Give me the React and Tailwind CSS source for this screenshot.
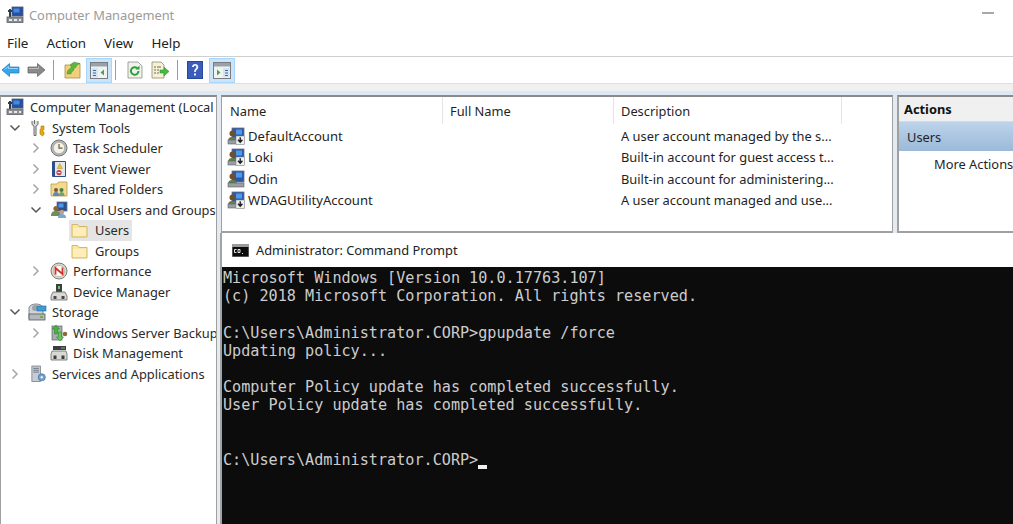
import React from "react";

const Svg = ({ w = 18, h = 18, vb = "0 0 18 18", className = "", children }) => (
  <svg width={w} height={h} viewBox={vb} className={`shrink-0 block ${className}`}>{children}</svg>
);

const CompMgmt = () => (
  <Svg>
    <rect x="6" y="1" width="11" height="9" fill="#2a4f9e" stroke="#4a5a78" strokeWidth="0.8" />
    <rect x="7.5" y="2.5" width="6" height="4" fill="#3f8be6" />
    <path d="M4 3v8M2 5h4" stroke="#2c3e50" strokeWidth="2" />
    <rect x="1" y="11" width="16" height="5.5" fill="#8a8f94" stroke="#5c6066" strokeWidth="0.8" />
    <rect x="3" y="13" width="3" height="2" fill="#e8e8e8" />
    <rect x="8" y="13" width="3" height="2" fill="#e8e8e8" />
    <rect x="13" y="13" width="2" height="2" fill="#e8e8e8" />
  </Svg>
);
const Tools = () => (
  <Svg w={16} h={18} vb="0 0 16 18">
    <path d="M4.5 1v4M2 2v3.5L4 7v9.5h2V7l2-1.5V2" fill="#dcdcdc" stroke="#6a6a6a" strokeWidth="1" />
    <path d="M11 7h3v3.5h-1v2.5h1v2.5l-1.5 1.5L10 15v-4.5L11 10z" fill="#e8a90c" stroke="#a87808" strokeWidth="0.6" />
  </Svg>
);
const Clock = () => (
  <Svg>
    <circle cx="9" cy="9" r="8" fill="#b4b8bc" stroke="#70767c" />
    <circle cx="9" cy="9" r="5.7" fill="#f7f3e4" stroke="#9a9a90" strokeWidth="0.6" />
    <path d="M9 5v4.2h3.6" stroke="#5d5d55" strokeWidth="1.2" fill="none" />
  </Svg>
);
const EventViewer = () => (
  <Svg>
    <rect x="2" y="1" width="14" height="16" rx="1" fill="#2f4f8a" />
    <rect x="5" y="2" width="10" height="14" fill="#e2e6ee" />
    <path d="M9.8 3.5l2.6 5H7.2z" fill="#f2c21e" stroke="#9b7a10" strokeWidth="0.4" />
    <circle cx="9" cy="12.6" r="2.6" fill="#c9413d" />
    <path d="M7.5 12.6h3" stroke="#fff" strokeWidth="1" />
  </Svg>
);
const SharedFolder = () => (
  <Svg>
    <path d="M1 4h6l1.5-2H17v14H1z" fill="#f3d98d" stroke="#b49a52" strokeWidth="0.8" />
    <circle cx="6" cy="10" r="2" fill="#7d5a34" />
    <path d="M3 16c0-3 1-4 3-4s3 1 3 4z" fill="#5e86b8" />
    <circle cx="11.5" cy="10" r="2" fill="#4a7a4a" />
    <path d="M9 16c0-3 1-4 2.5-4s3 1 3 4z" fill="#6fa36f" />
  </Svg>
);
const LocalUsers = () => (
  <Svg>
    <rect x="7" y="1" width="10" height="9" fill="#27508f" stroke="#6c7480" strokeWidth="0.8" />
    <rect x="8.5" y="2.5" width="5" height="4" fill="#4c98ea" />
    <circle cx="6" cy="7.5" r="2.6" fill="#8a6238" />
    <path d="M1 15c0-4 2-5 5-5s5 1 5 5z" fill="#6f8f58" />
    <circle cx="12" cy="11" r="2.2" fill="#c0a080" />
    <path d="M8 17c0-3 1.6-4 4-4s4 1 4 4z" fill="#7ea4d0" />
  </Svg>
);
const Folder = () => (
  <Svg w={17} h={16} vb="0 0 17 16">
    <path d="M1 2.5h5.5L8 4.5h8v10.5H1z" fill="#fbe6a5" stroke="#d3b867" strokeWidth="1" />
    <rect x="2" y="6" width="13" height="8" fill="#fdeebb" />
  </Svg>
);
const Performance = () => (
  <Svg>
    <circle cx="9" cy="9" r="8" fill="#d9d7cb" stroke="#7e7e76" />
    <circle cx="9" cy="9" r="5.6" fill="#fbfbf5" stroke="#a4a49a" strokeWidth="0.6" />
    <path d="M5.5 12.5V6l7 6V5.5" stroke="#d3322e" strokeWidth="1.8" fill="none" />
  </Svg>
);
const DeviceMgr = () => (
  <Svg>
    <rect x="6" y="1" width="6" height="8" fill="#3d3f42" />
    <rect x="8" y="3" width="2" height="3" fill="#63c46a" />
    <path d="M3 9h12l2 4v4H1v-4z" fill="#d8d8d4" stroke="#6a6a68" strokeWidth="0.8" />
    <rect x="3.5" y="13" width="3" height="3" fill="#4a4a4a" />
    <rect x="11.5" y="13" width="3" height="3" fill="#4a4a4a" />
  </Svg>
);
const Storage = () => (
  <Svg w={19} h={18} vb="0 0 19 18" className="-ml-[2px] -mr-[1px]">
    <path d="M1 5c0-2 3-4 7-4s7 2 7 4v11H1z" fill="#d0d4d8" stroke="#666e76" strokeWidth="0.8" />
    <circle cx="7" cy="5" r="3" fill="#9aa2aa" />
    <rect x="9" y="3" width="9" height="5" fill="#3d9bd6" stroke="#256c9e" strokeWidth="0.6" />
    <rect x="1" y="11" width="16" height="6" fill="#b4b8bc" stroke="#555b60" strokeWidth="0.8" />
    <rect x="12" y="13" width="3" height="2" fill="#74b03e" />
  </Svg>
);
const Backup = () => (
  <Svg>
    <rect x="2" y="2" width="10" height="14" fill="#a8adb2" stroke="#5d6268" strokeWidth="0.7" />
    <path d="M6 1l3.5 4H7.5v5H4.5V5H2.5z" fill="#47b53f" stroke="#267d22" strokeWidth="0.5" />
    <path d="M10 17l-3.5-4h2V8h3v5h2z" fill="#5fcb4f" stroke="#267d22" strokeWidth="0.5" />
    <circle cx="15" cy="10" r="2.3" fill="#8a6a44" />
  </Svg>
);
const Disk = () => (
  <Svg>
    <path d="M3 2h13v4H3z" fill="#3b3d40" />
    <rect x="11" y="3.5" width="4" height="1" fill="#71c44c" />
    <path d="M2 7h14l1 3v6H1v-6z" fill="#d8d8d4" stroke="#66686a" strokeWidth="0.8" />
    <rect x="3.5" y="11.5" width="3" height="3.5" fill="#3f3f3f" />
    <rect x="11.5" y="11.5" width="3" height="3.5" fill="#3f3f3f" />
  </Svg>
);
const Services = () => (
  <Svg w={16} h={18} vb="0 0 17 18">
    <rect x="2" y="0.5" width="9" height="16.5" fill="#c6ccd4" stroke="#6f7884" strokeWidth="0.8" />
    <path d="M3.5 3h6M3.5 5h6M3.5 7h6" stroke="#5f6a78" strokeWidth="0.9" />
    <circle cx="12.5" cy="12.5" r="3.8" fill="#6f9fcc" stroke="#3f6c9a" strokeWidth="0.7" />
    <circle cx="12.5" cy="12.5" r="1.3" fill="#e6eef6" />
  </Svg>
);
const User = ({ arrow = true }) => (
  <Svg>
    <rect x="5" y="1" width="12" height="11" fill="#2b58a8" stroke="#6a7280" strokeWidth="0.8" />
    <rect x="9" y="2.5" width="6" height="5" fill="#4c9bec" />
    <circle cx="5.5" cy="6.5" r="3" fill="#6e5030" />
    <path d="M1 15c0-4 1.5-5 4.5-5S10 11 10 15z" fill="#627d4e" />
    <rect x="1" y="13" width="16" height="4" fill="#9a9ea4" stroke="#5b5f66" strokeWidth="0.6" />
    {arrow ? (
      <>
        <rect x="9" y="9" width="8.5" height="8.5" fill="#eef0f2" stroke="#7c8088" strokeWidth="0.5" />
        <path d="M13.2 10.2v4.3M11 12.8l2.2 2.5 2.2-2.5" stroke="#1e1e1e" strokeWidth="1.4" fill="none" />
      </>
    ) : null}
  </Svg>
);
const BackArrow = () => (
  <Svg w={19} h={16} vb="0 0 19 16">
    <path d="M1 8l7.5-6.5V5H18v6H8.5v3.5z" fill="#37a4ec" stroke="#1f79b8" strokeWidth="0.7" />
    <path d="M3.5 7.5l4-3v2H17" stroke="#9ad6fa" strokeWidth="1" fill="none" />
  </Svg>
);
const FwdArrow = () => (
  <Svg w={19} h={16} vb="0 0 19 16">
    <path d="M18 8l-7.5-6.500V5H1v6h9.500v3.500z" fill="#8a8a8a" stroke="#5e5e5e" strokeWidth="0.7" />
    <path d="M2 6.500h9.500v-2" stroke="#bcbcbc" strokeWidth="1" fill="none" />
  </Svg>
);
const UpFolder = () => (
  <Svg w={17} h={18} vb="0 0 17 18">
    <path d="M1 4h6l1-1.500h8V17H1z" fill="#f2cf7e" stroke="#a98d46" strokeWidth="0.8" />
    <path d="M3 13c0-3 1.500-5 4-6V4.500L6 4l4-3 6 1.500-3.500 2L12 6.500 10 7v2c-1 1-2.500 1.500-3 4z" fill="#5cb83c" stroke="#3b8a25" strokeWidth="0.4" />
  </Svg>
);
const PanePrimary = ({ mirror }) => (
  <Svg w={18} h={17} vb="0 0 18 17">
    <rect x="0.5" y="0.5" width="17" height="16" fill="#f1f2f3" stroke="#767c82" />
    <rect x="1" y="1" width="16" height="3.5" fill="#9aa1a8" />
    {mirror ? (
      <>
        <path d="M4 7.500v6l3.500-3z" fill="#3cae3c" />
        <rect x="10" y="6" width="6.5" height="9.500" fill="#d4e4f4" />
        <path d="M12 8.500h3M12 11h3M12 13.500h3" stroke="#3d6ea3" strokeWidth="1" />
      </>
    ) : (
      <>
        <rect x="1.5" y="6" width="6.5" height="9.500" fill="#d4e4f4" />
        <path d="M3 8.500h3M3 11h3M3 13.500h3" stroke="#3d6ea3" strokeWidth="1" />
        <path d="M14 7.500v6l-3.500-3z" fill="#3cae3c" />
      </>
    )}
  </Svg>
);
const Refresh = () => (
  <Svg w={16} h={18} vb="0 0 16 18">
    <path d="M1 1h10l4 4v12H1z" fill="#f1f1ee" stroke="#8d8d86" strokeWidth="0.8" />
    <path d="M11.500 10a3.800 3.800 0 1 1-1.200-2.800" stroke="#2f9f3a" strokeWidth="2" fill="none" />
    <path d="M12.500 4.500v4h-4z" fill="#2f9f3a" />
  </Svg>
);
const Export = () => (
  <Svg w={18} h={18} vb="0 0 18 18">
    <path d="M1 1h9l3 3v13H1z" fill="#f6f0d4" stroke="#8f8a70" strokeWidth="0.8" />
    <path d="M3 6h2M6 6h4M3 9h2M6 9h2M3 12h2M6 12h2" stroke="#6d6a5a" strokeWidth="1" />
    <path d="M9 9h4V6l5 4.500-5 4.500v-3H9z" fill="#49b843" stroke="#2f8a2b" strokeWidth="0.5" />
  </Svg>
);
const Help = () => (
  <svg width="16" height="18" viewBox="0 0 16 18" className="shrink-0 block">
    <rect width="16" height="18" fill="#27479e" />
    <rect x="1" y="1" width="14" height="16" fill="#3a5dbc" />
    <path d="M5 6c0-2 1.500-3 3.200-3S11.300 4 11.300 6c0 2.400-2.400 2.400-2.400 5H7.100c0-3.200 2.200-3.200 2.200-5 0-.8-.4-1.200-1.100-1.200S7 5.200 7 6z" fill="#f2f4fa" />
    <rect x="7" y="12.500" width="2" height="2" fill="#f2f4fa" />
  </svg>
);
const CmdIcon = () => (
  <svg width="17" height="13" viewBox="0 0 17 13" className="shrink-0 block">
    <rect width="17" height="13" fill="#9a9a9a" />
    <rect x="0.5" y="3" width="16" height="9.500" fill="#0c0c0c" />
    <path d="M2.500 5.500h2M2.500 5.500v3h2M6 5.500h2v3H6zM10 9.500h1" stroke="#e4e4e4" strokeWidth="1" fill="none" />
  </svg>
);

const Chevron = ({ open }) => (
  <svg width="12" height="12" viewBox="0 0 12 12" className="shrink-0 block">
    {open ? (
      <path d="M1.500 3.500L6 8l4.500-4.500" fill="none" stroke="#555" strokeWidth="1.5" />
    ) : (
      <path d="M3.500 1.500L8 6l-4.500 4.500" fill="none" stroke="#a6a6a6" strokeWidth="1.5" />
    )}
  </svg>
);

const tree = [
  { t: "Computer Management (Local", icon: <CompMgmt />, lvl: 0 },
  { t: "System Tools", icon: <Tools />, lvl: 1, c: "open" },
  { t: "Task Scheduler", icon: <Clock />, lvl: 2, c: "closed" },
  { t: "Event Viewer", icon: <EventViewer />, lvl: 2, c: "closed" },
  { t: "Shared Folders", icon: <SharedFolder />, lvl: 2, c: "closed" },
  { t: "Local Users and Groups", icon: <LocalUsers />, lvl: 2, c: "open" },
  { t: "Users", icon: <Folder />, lvl: 3, sel: true },
  { t: "Groups", icon: <Folder />, lvl: 3 },
  { t: "Performance", icon: <Performance />, lvl: 2, c: "closed" },
  { t: "Device Manager", icon: <DeviceMgr />, lvl: 2 },
  { t: "Storage", icon: <Storage />, lvl: 1, c: "open" },
  { t: "Windows Server Backup", icon: <Backup />, lvl: 2, c: "closed" },
  { t: "Disk Management", icon: <Disk />, lvl: 2 },
  { t: "Services and Applications", icon: <Services />, lvl: 1, c: "closed" },
];

const rowPad = { 0: "pl-[5px]", 1: "pl-[8px]", 2: "pl-[29px]", 3: "pl-[70px]" };

const TreeRow = ({ r }) => {
  const chevronSlot = r.lvl === 1 || r.lvl === 2;
  return (
    <div className={`h-[20.5px] flex items-center whitespace-nowrap ${rowPad[r.lvl]}`}>
      {chevronSlot ? (
        <div className="w-[14px] shrink-0">{r.c ? <Chevron open={r.c === "open"} /> : null}</div>
      ) : null}
      <div className={`flex items-center h-full ${r.sel ? "bg-[#e5e5e5] -ml-[2px] pl-[2px] pr-[3px]" : ""} ${r.lvl === 1 ? "ml-[7px] gap-[6px]" : ""} ${r.lvl === 2 ? "ml-[6px] gap-[5px]" : ""} ${r.lvl === 0 ? "gap-[6px]" : ""} ${r.lvl === 3 ? "gap-[7px]" : ""}`}>
        {r.icon}
        <span>{r.t}</span>
      </div>
    </div>
  );
};

const users = [
  ["DefaultAccount", "A user account managed by the s...", true],
  ["Loki", "Built-in account for guest access t...", true],
  ["Odin", "Built-in account for administering...", false],
  ["WDAGUtilityAccount", "A user account managed and use...", true],
];

const Hdr = ({ w, pad, children }) => (
  <div className={`h-[27px] pt-[1px] flex items-center shrink-0 border-r border-[#e5e5e5] ${w} ${pad}`}>
    {children}
  </div>
);

const lines = [
  "Microsoft Windows [Version 10.0.17763.107]",
  "(c) 2018 Microsoft Corporation. All rights reserved.",
  "",
  "C:\\Users\\Administrator.CORP>gpupdate /force",
  "Updating policy...",
  "",
  "Computer Policy update has completed successfully.",
  "User Policy update has completed successfully.",
  "",
  "",
];

export default function App() {
  return (
    <div className="w-[1013px] h-[524px] overflow-hidden bg-white flex flex-col text-[12.85px] leading-[20px] text-[#1f1f1f] font-['Noto_Sans','Open_Sans',sans-serif]">
      {/* title bar */}
      <div className="h-[29px] shrink-0 flex items-center pl-[6px] gap-[5px] pt-[1px]">
        <CompMgmt />
        <span className="text-[#9b9b9b]">Computer Management</span>
        <div className="ml-auto mr-[19px] mb-[4px] w-[12px] h-[2px] bg-[#a8a8a8]" />
      </div>
      {/* menu */}
      <div className="h-[28px] shrink-0 flex items-center pl-[7px] gap-[18px] border-b border-[#cfcfcf] text-[#222] text-[13.4px]">
        <span>File</span>
        <span>Action</span>
        <span>View</span>
        <span>Help</span>
      </div>
      {/* toolbar */}
      <div className="h-[26px] shrink-0 flex items-center pl-[1px]">
        <BackArrow />
        <div className="ml-[7px]"><FwdArrow /></div>
        <div className="ml-[7px] w-px h-[20px] bg-[#9c9c9c]" />
        <div className="ml-[10px]"><UpFolder /></div>
        <div className="ml-[5px] w-[26px] h-[25px] bg-[#cce4f7] border border-[#a6d6fb] flex items-center justify-center"><PanePrimary mirror={false} /></div>
        <div className="ml-[3px] w-px h-[20px] bg-[#9c9c9c]" />
        <div className="ml-[11px]"><Refresh /></div>
        <div className="ml-[8px]"><Export /></div>
        <div className="ml-[8px] w-px h-[20px] bg-[#9c9c9c]" />
        <div className="ml-[9px]"><Help /></div>
        <div className="ml-[6px] w-[26px] h-[25px] bg-[#cce4f7] border border-[#a6d6fb] flex items-center justify-center"><PanePrimary mirror /></div>
      </div>
      {/* strip */}
      <div className="h-[8px] shrink-0 bg-[#f0f0f0] border-t border-[#dfdfdf]" />
      <div className="h-[4px] shrink-0 bg-[#dce8f4]" />
      {/* body */}
      <div className="flex-1 min-h-0 flex bg-[#e3eaf2]">
        {/* tree */}
        <div className="w-[217px] shrink-0 bg-white border-l border-t-2 border-r border-[#a0a0a0] border-t-[#8a8a8a] overflow-hidden text-[#2a2a2a]">
          {tree.map((r) => (
            <TreeRow key={r.t} r={r} />
          ))}
        </div>
        <div className="flex-1 min-w-0 flex flex-col pl-[4px]">
          {/* upper panes */}
          <div className="h-[138px] shrink-0 flex gap-[4px]">
            <div className="w-[672px] shrink-0 bg-white border border-t-2 border-b-2 border-[#a0a0a0] border-t-[#8a8a8a] overflow-hidden">
              <div className="flex">
                <Hdr w="w-[221px]" pad="pl-[8px]">Name</Hdr>
                <Hdr w="w-[171px]" pad="pl-[7px]">Full Name</Hdr>
                <Hdr w="w-[228px]" pad="pl-[7px]">Description</Hdr>
              </div>
              <div className="pt-[1px]">
                {users.map(([n, d, a]) => (
                  <div key={n} className="h-[21.5px] flex items-center whitespace-nowrap">
                    <div className="w-[220px] shrink-0 flex items-center pl-[5px] gap-[3px] text-[13.1px]">
                      <User arrow={a} />
                      <span>{n}</span>
                    </div>
                    <div className="w-[171px] shrink-0" />
                    <div className="pl-[8px]">{d}</div>
                  </div>
                ))}
              </div>
            </div>
            <div className="flex-1 min-w-0 bg-white border-l-2 border-t-2 border-b-2 border-[#a0a0a0] border-t-[#8a8a8a] overflow-hidden">
              <div className="h-[25px] bg-[#f0f0f0] flex items-center pl-[5px] font-bold border-b border-[#d9d9d9] text-[#111]">Actions</div>
              <div className="h-[29px] bg-gradient-to-b from-[#bdd3e9] to-[#9bb9d9] flex items-center pl-[8px]">Users</div>
              <div className="pl-[35px] pt-[3px] whitespace-nowrap">More Actions</div>
            </div>
          </div>
          {/* command prompt */}
          <div className="flex-1 min-h-0 flex flex-col bg-white border-l-2 border-[#a3a3a3] -ml-[1px]">
            <div className="h-[34px] shrink-0 bg-white flex items-center pl-[10px] gap-[7px] text-[#222]">
              <CmdIcon />
              <span>Administrator: Command Prompt</span>
            </div>
            <pre className="flex-1 min-h-0 bg-[#0c0c0c] text-[#cccccc] pl-[1px] pt-[2px] text-[15.15px] leading-[18.2px] font-['DejaVu_Sans_Mono','Liberation_Mono',monospace] overflow-hidden">
              {lines.map((l, i) => (
                <div key={i} className="h-[18.2px]">{l}</div>
              ))}
              <div className="h-[18.2px] flex items-end">
                <span>C:\Users\Administrator.CORP&gt;</span>
                <span className="inline-block w-[9px] h-[4px] bg-[#f0f0f0]" />
              </div>
            </pre>
          </div>
        </div>
      </div>
    </div>
  );
}
